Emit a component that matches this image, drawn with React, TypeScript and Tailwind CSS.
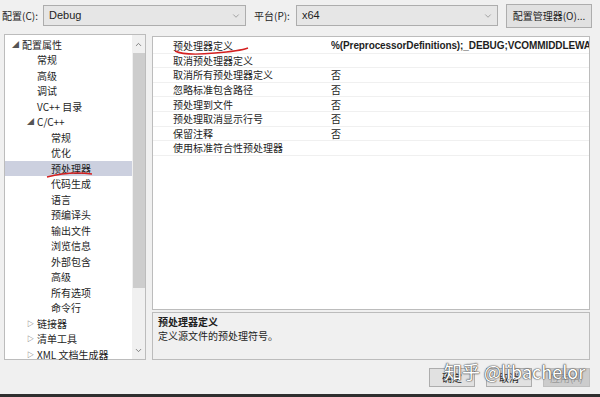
import { ChevronDown, ChevronUp } from "lucide-react";

const cjk = "font-['Microsoft_YaHei','Noto_Sans_CJK_SC',sans-serif]";

type Node = { label: string; level: number; arrow?: "open" | "closed"; selected?: boolean };

const tree: Node[] = [
  { label: "配置属性", level: 0, arrow: "open" },
  { label: "常规", level: 1 },
  { label: "高级", level: 1 },
  { label: "调试", level: 1 },
  { label: "VC++ 目录", level: 1 },
  { label: "C/C++", level: 1, arrow: "open" },
  { label: "常规", level: 2 },
  { label: "优化", level: 2 },
  { label: "预处理器", level: 2, selected: true },
  { label: "代码生成", level: 2 },
  { label: "语言", level: 2 },
  { label: "预编译头", level: 2 },
  { label: "输出文件", level: 2 },
  { label: "浏览信息", level: 2 },
  { label: "外部包含", level: 2 },
  { label: "高级", level: 2 },
  { label: "所有选项", level: 2 },
  { label: "命令行", level: 2 },
  { label: "链接器", level: 1, arrow: "closed" },
  { label: "清单工具", level: 1, arrow: "closed" },
  { label: "XML 文档生成器", level: 1, arrow: "closed" },
];

const props: [string, string][] = [
  ["预处理器定义", "%(PreprocessorDefinitions);_DEBUG;VCOMMIDDLEWARE"],
  ["取消预处理器定义", ""],
  ["取消所有预处理器定义", "否"],
  ["忽略标准包含路径", "否"],
  ["预处理到文件", "否"],
  ["预处理取消显示行号", "否"],
  ["保留注释", "否"],
  ["使用标准符合性预处理器", ""],
];

const indent = ["pl-[7px]", "pl-[22px]", "pl-[36px]"];

function Combo({ value, width }: { value: string; width: string }) {
  return (
    <div className={`${width} h-[21px] border border-[#adadad] bg-[#e6e6e6] flex items-center justify-between pl-[5px] pr-[4px]`}>
      <span className="text-[11px] text-[#1e1e1e] font-['Segoe_UI','Liberation_Sans',sans-serif]">{value}</span>
      <ChevronDown size={10} strokeWidth={1.5} className="text-[#7a7a7a]" />
    </div>
  );
}

function TreeRow({ n }: { n: Node }) {
  return (
    <div className={`h-[15.5px] flex items-center ${indent[n.level]} ${n.selected ? "bg-[#ccd0df]" : ""}`}>
      <span className="w-[10px] text-[7px] text-[#555] leading-none">
        {n.arrow === "open" ? "◢" : n.arrow === "closed" ? "▷" : ""}
      </span>
      <span className="text-[10px] text-[#1e1e1e] whitespace-nowrap">{n.label}</span>
    </div>
  );
}

export default function App() {
  return (
    <div className={`w-[600px] h-[397px] bg-[#f0f0f0] flex flex-col relative overflow-hidden ${cjk}`}>
      {/* top selectors */}
      <div className="h-[34px] flex items-center pl-[2px] pb-[3px] text-[10px] text-[#1e1e1e]">
        <span className="w-[41px]">配置(C):</span>
        <Combo value="Debug" width="w-[203px]" />
        <span className="ml-[8px] w-[42px]">平台(P):</span>
        <Combo value="x64" width="w-[202px]" />
        <div className="ml-[8px] w-[86px] h-[24px] border border-[#adadad] bg-[#e1e1e1] flex items-center justify-center">
          配置管理器(O)...
        </div>
      </div>

      <div className="flex">
        {/* tree */}
        <div className="ml-[4px] w-[142px] h-[326px] border border-[#bcbcbc] bg-white flex">
          <div className="flex-1 pt-[1.5px]">
            {tree.map((n, i) => (
              <TreeRow key={i} n={n} />
            ))}
          </div>
          <div className="w-[13px] bg-[#f0f0f0] flex flex-col items-center">
            <ChevronUp size={9} strokeWidth={2} className="text-[#606060] mt-[5px]" />
            <div className="w-[12px] h-[235px] bg-[#cdcdcd] mt-[4px]" />
            <div className="flex-1" />
            <ChevronDown size={9} strokeWidth={2} className="text-[#606060] mb-[4px]" />
          </div>
        </div>

        {/* property grid */}
        <div className="ml-[6px] w-[438px] flex flex-col">
          <div className="mt-[2px] h-[274px] border border-[#bcbcbc] bg-white pt-[2px]">
            {props.map(([name, value], i) => (
              <div key={i} className="h-[14.6px] flex items-center border-b border-[#f0f0f0] text-[10px] text-[#1e1e1e]">
                <span className="w-[178px] pl-[20px] whitespace-nowrap">{name}</span>
                <span className={`flex-1 whitespace-nowrap overflow-hidden ${i === 0 ? "font-bold font-['Segoe_UI','Liberation_Sans',sans-serif] text-[10px] tracking-[-0.1px]" : ""}`}>
                  {value}
                </span>
              </div>
            ))}
          </div>
          <div className="mt-[2px] h-[48px] border border-[#bcbcbc] bg-[#f0f0f0] px-[5px] pt-[2px] text-[10px] text-[#1e1e1e] leading-[14px]">
            <div className="font-bold">预处理器定义</div>
            <div>定义源文件的预处理符号。</div>
          </div>
        </div>
      </div>

      {/* buttons */}
      <div className="mt-[8px] flex justify-end gap-[11px] pr-[10px] text-[10px]">
        <div className="w-[46px] h-[19px] border border-[#adadad] bg-[#e1e1e1] flex items-center justify-center text-[#1e1e1e]">确定</div>
        <div className="w-[46px] h-[19px] border border-[#adadad] bg-[#e1e1e1] flex items-center justify-center text-[#1e1e1e]">取消</div>
        <div className="w-[47px] h-[19px] border border-[#bfbfbf] bg-[#cccccc] flex items-center justify-center text-[#9a9a9a]">应用(A)</div>
      </div>
      <div className="flex-1" />
      <div className="h-[3px] bg-[#2f2f2f]" />

      {/* red annotation strokes */}
      <svg className="absolute left-0 top-0 pointer-events-none" width="600" height="397">
        <path d="M47 177 Q70 171 92 174" stroke="#d42020" strokeWidth="1.4" fill="none" />
        <path d="M175 51 Q185 56 215 53 Q240 51 248 48" stroke="#d42020" strokeWidth="1.4" fill="none" />
      </svg>

      {/* watermark */}
      <div className="absolute left-[444px] top-[358px] text-[18px] text-white font-['Noto_Sans_CJK_SC',sans-serif] [text-shadow:0_0_1px_#444,0_0_1px_#444,0_0_2px_#666] whitespace-nowrap">
        知乎 @libachelor
      </div>
    </div>
  );
}
